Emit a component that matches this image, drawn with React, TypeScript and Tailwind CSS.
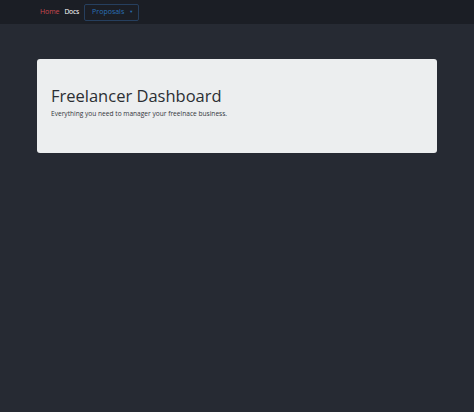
export default function App() {
  return (
    <div className="min-h-[412px] bg-[#262a33] font-['Open_Sans',sans-serif]">
      <nav className="flex h-6 items-center bg-[#1b1e25] pl-[40px]">
        <a className="text-[7px] tracking-[-0.1px] text-[#c9484f]">Home</a>
        <a className="ml-[5px] text-[6.8px] tracking-[-0.2px] text-white">Docs</a>
        <button className="ml-[5px] flex h-[17px] items-center gap-[5px] rounded-[2px] border border-[#263f5e] pl-[7px] pr-[5px] text-[7px] text-[#2a6fb5]">
          Proposals
          <span className="text-[4px]">▼</span>
        </button>
      </nav>
      <div className="px-[37px] pt-[35px]">
        <div className="h-[94px] rounded-[3px] bg-[#eceeef] px-[14px] pt-[27px]">
          <h1 className="text-[16.5px] leading-[1.25] text-[#2b2e33]">Freelancer Dashboard</h1>
          <p className="mt-[2px] text-[6.6px] text-[#33363b]">Everything you need to manager your freelnace business.</p>
        </div>
      </div>
    </div>
  );
}
